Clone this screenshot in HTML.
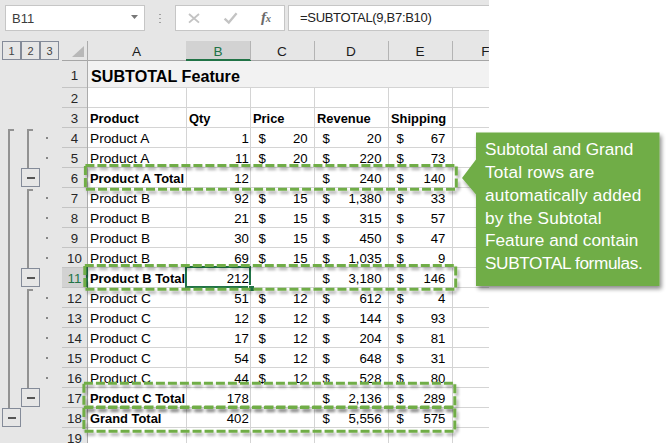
<!DOCTYPE html><html><head><meta charset="utf-8"><title>SUBTOTAL Feature</title><style>
html,body{margin:0;padding:0;background:#fff;}
body{width:672px;height:443px;overflow:hidden;position:relative;font-family:"Liberation Sans",sans-serif;}
#app{position:absolute;left:0;top:0;width:489px;height:443px;background:#e6e6e6;overflow:hidden;}
.abs{position:absolute;}
.box{position:absolute;background:#fff;border:1px solid #c6c6c6;box-sizing:border-box;}
#grid{position:absolute;left:88px;top:61px;width:401px;height:382px;background:#fff;}
.vl{position:absolute;width:1px;background:#d4d4d4;}
.hl{position:absolute;height:1px;background:#d4d4d4;}
.ch{position:absolute;top:41px;height:19px;line-height:21px;text-align:center;font-size:13.6px;color:#1c1c1c;}
.rh{position:absolute;left:62px;width:25px;height:20px;line-height:22px;text-align:center;font-size:13.3px;color:#262626;}
.c{position:absolute;height:20px;line-height:22px;font-size:13.7px;color:#000;white-space:nowrap;}
.n{font-size:13.2px;}
.b{font-weight:bold;font-size:12.9px;}
.r{text-align:right;}
.lvl{position:absolute;top:41px;width:19px;height:19px;box-sizing:border-box;border:1px solid #848b99;font-size:11px;line-height:18px;text-align:center;color:#444;}
.minus{position:absolute;width:19px;height:19px;box-sizing:border-box;border:1px solid #848b99;background:#e6e6e6;}
.minus i{position:absolute;left:5px;top:8px;width:8px;height:2px;background:#555;}
.dot{position:absolute;left:46px;width:2px;height:2px;background:#868686;}
#callout{position:absolute;left:485px;top:138.3px;width:172px;color:#fff;font-size:17.2px;line-height:22.75px;white-space:nowrap;}
</style></head><body>
<div id="app">
<div class="box" style="left:5px;top:5px;width:140px;height:26px;"></div>
<div class="abs" style="left:12px;top:10px;font-size:13px;line-height:18px;color:#3c3c3c;">B11</div>
<svg class="abs" style="left:130px;top:14px" width="10" height="6"><path d="M1 1h7l-3.5 4z" fill="#777"/></svg>
<div class="abs" style="left:159px;top:14px;width:2px;height:1px;background:#a0a0a0"></div>
<div class="abs" style="left:159px;top:18px;width:2px;height:1px;background:#a0a0a0"></div>
<div class="abs" style="left:159px;top:22px;width:2px;height:1px;background:#a0a0a0"></div>
<div class="box" style="left:175px;top:5px;width:110px;height:26px;"></div>
<svg class="abs" style="left:175px;top:5px" width="109" height="26"><path d="M14 9l10 8.6M24 9l-10 8.6" stroke="#c3c3c3" stroke-width="1.9" fill="none"/><path d="M49.6 13.6l4.2 4l7.8-9.4" stroke="#c3c3c3" stroke-width="2.3" fill="none"/></svg>
<div class="abs" style="left:261px;top:8px;font-family:'Liberation Serif',serif;font-style:italic;font-weight:bold;font-size:15.5px;line-height:18px;color:#6a6a6a;">f<span style="font-size:10.5px;margin-left:-0.5px">x</span></div>
<div class="box" style="left:288px;top:5px;width:210px;height:26px;"></div>
<div class="abs" style="left:300px;top:9px;font-size:13px;letter-spacing:-0.3px;line-height:18px;color:#222;">=SUBTOTAL(9,B7:B10)</div>
<div class="lvl" style="left:2px">1</div>
<div class="lvl" style="left:21px">2</div>
<div class="lvl" style="left:40px">3</div>
<svg class="abs" style="left:71px;top:45px" width="14" height="13"><path d="M13 1v11h-12z" fill="#b8b8b8"/></svg>
<div class="abs" style="left:62px;top:60px;width:427px;height:1px;background:#a6a6a6"></div>
<div class="ch" style="left:87px;width:99px;">A</div>
<div class="abs" style="left:186px;top:41px;width:1px;height:19px;background:#b4b4b4"></div>
<div class="abs" style="left:186px;top:41px;width:65px;height:19px;background:#d2d2d2"></div>
<div class="abs" style="left:186px;top:59px;width:65px;height:2px;background:#217346"></div>
<div class="ch" style="left:186px;width:64px;color:#217346;">B</div>
<div class="abs" style="left:250px;top:41px;width:1px;height:19px;background:#b4b4b4"></div>
<div class="ch" style="left:250px;width:64px;">C</div>
<div class="abs" style="left:314px;top:41px;width:1px;height:19px;background:#b4b4b4"></div>
<div class="ch" style="left:314px;width:74px;">D</div>
<div class="abs" style="left:388px;top:41px;width:1px;height:19px;background:#b4b4b4"></div>
<div class="ch" style="left:388px;width:64px;">E</div>
<div class="abs" style="left:452px;top:41px;width:1px;height:19px;background:#b4b4b4"></div>
<div class="ch" style="left:452px;width:67px;">F</div>
<div class="abs" style="left:87px;top:41px;width:1px;height:402px;background:#ababab"></div>
<div class="rh" style="top:61px;height:27px;line-height:29px;">1</div>
<div class="abs" style="left:62px;top:87px;width:25px;height:1px;background:#c4c4c4"></div>
<div class="rh" style="top:88px;height:20px;line-height:22px;">2</div>
<div class="abs" style="left:62px;top:107px;width:25px;height:1px;background:#c4c4c4"></div>
<div class="rh" style="top:108px;height:20px;line-height:22px;">3</div>
<div class="abs" style="left:62px;top:127px;width:25px;height:1px;background:#c4c4c4"></div>
<div class="rh" style="top:128px;height:20px;line-height:22px;">4</div>
<div class="abs" style="left:62px;top:147px;width:25px;height:1px;background:#c4c4c4"></div>
<div class="rh" style="top:148px;height:20px;line-height:22px;">5</div>
<div class="abs" style="left:62px;top:167px;width:25px;height:1px;background:#c4c4c4"></div>
<div class="rh" style="top:168px;height:20px;line-height:22px;">6</div>
<div class="abs" style="left:62px;top:187px;width:25px;height:1px;background:#c4c4c4"></div>
<div class="rh" style="top:188px;height:20px;line-height:22px;">7</div>
<div class="abs" style="left:62px;top:207px;width:25px;height:1px;background:#c4c4c4"></div>
<div class="rh" style="top:208px;height:20px;line-height:22px;">8</div>
<div class="abs" style="left:62px;top:227px;width:25px;height:1px;background:#c4c4c4"></div>
<div class="rh" style="top:228px;height:20px;line-height:22px;">9</div>
<div class="abs" style="left:62px;top:247px;width:25px;height:1px;background:#c4c4c4"></div>
<div class="rh" style="top:248px;height:20px;line-height:22px;">10</div>
<div class="abs" style="left:62px;top:267px;width:25px;height:1px;background:#c4c4c4"></div>
<div class="abs" style="left:62px;top:268px;width:25px;height:20px;background:#d2d2d2"></div>
<div class="abs" style="left:86px;top:267px;width:2px;height:21px;background:#217346"></div>
<div class="rh" style="top:268px;height:20px;line-height:22px;color:#217346;">11</div>
<div class="abs" style="left:62px;top:287px;width:25px;height:1px;background:#c4c4c4"></div>
<div class="rh" style="top:288px;height:20px;line-height:22px;">12</div>
<div class="abs" style="left:62px;top:307px;width:25px;height:1px;background:#c4c4c4"></div>
<div class="rh" style="top:308px;height:20px;line-height:22px;">13</div>
<div class="abs" style="left:62px;top:327px;width:25px;height:1px;background:#c4c4c4"></div>
<div class="rh" style="top:328px;height:20px;line-height:22px;">14</div>
<div class="abs" style="left:62px;top:347px;width:25px;height:1px;background:#c4c4c4"></div>
<div class="rh" style="top:348px;height:20px;line-height:22px;">15</div>
<div class="abs" style="left:62px;top:367px;width:25px;height:1px;background:#c4c4c4"></div>
<div class="rh" style="top:368px;height:20px;line-height:22px;">16</div>
<div class="abs" style="left:62px;top:387px;width:25px;height:1px;background:#c4c4c4"></div>
<div class="rh" style="top:388px;height:20px;line-height:22px;">17</div>
<div class="abs" style="left:62px;top:407px;width:25px;height:1px;background:#c4c4c4"></div>
<div class="rh" style="top:408px;height:20px;line-height:22px;">18</div>
<div class="abs" style="left:62px;top:427px;width:25px;height:1px;background:#c4c4c4"></div>
<div class="rh" style="top:428px;height:20px;line-height:22px;">19</div>
<div class="abs" style="left:62px;top:447px;width:25px;height:1px;background:#c4c4c4"></div>
<div class="abs" style="left:8px;top:129px;width:2px;height:279px;background:#929292"></div>
<div class="abs" style="left:8px;top:129px;width:6px;height:2px;background:#929292"></div>
<div class="abs" style="left:27px;top:129px;width:2px;height:39px;background:#929292"></div>
<div class="abs" style="left:27px;top:129px;width:6px;height:2px;background:#929292"></div>
<div class="abs" style="left:27px;top:189px;width:2px;height:79px;background:#929292"></div>
<div class="abs" style="left:27px;top:189px;width:6px;height:2px;background:#929292"></div>
<div class="abs" style="left:27px;top:289px;width:2px;height:99px;background:#929292"></div>
<div class="abs" style="left:27px;top:289px;width:6px;height:2px;background:#929292"></div>
<div class="minus" style="left:21px;top:168px"><i></i></div>
<div class="minus" style="left:21px;top:268px"><i></i></div>
<div class="minus" style="left:21px;top:388px"><i></i></div>
<div class="minus" style="left:2px;top:408px"><i></i></div>
<div class="dot" style="top:137px"></div>
<div class="dot" style="top:157px"></div>
<div class="dot" style="top:197px"></div>
<div class="dot" style="top:217px"></div>
<div class="dot" style="top:237px"></div>
<div class="dot" style="top:257px"></div>
<div class="dot" style="top:297px"></div>
<div class="dot" style="top:317px"></div>
<div class="dot" style="top:337px"></div>
<div class="dot" style="top:357px"></div>
<div class="dot" style="top:377px"></div>
<div id="grid">
<div class="abs" style="left:0;top:0;width:401px;height:26px;background:#f2f2f2"></div>
<div class="vl" style="left:98px;top:26px;height:356px"></div>
<div class="vl" style="left:162px;top:26px;height:356px"></div>
<div class="vl" style="left:226px;top:26px;height:356px"></div>
<div class="vl" style="left:300px;top:26px;height:356px"></div>
<div class="vl" style="left:364px;top:26px;height:356px"></div>
<div class="hl" style="left:0;top:26px;width:402px"></div>
<div class="hl" style="left:0;top:46px;width:402px"></div>
<div class="hl" style="left:0;top:66px;width:402px"></div>
<div class="hl" style="left:0;top:86px;width:402px"></div>
<div class="hl" style="left:0;top:106px;width:402px"></div>
<div class="hl" style="left:0;top:126px;width:402px"></div>
<div class="hl" style="left:0;top:146px;width:402px"></div>
<div class="hl" style="left:0;top:166px;width:402px"></div>
<div class="hl" style="left:0;top:186px;width:402px"></div>
<div class="hl" style="left:0;top:206px;width:402px"></div>
<div class="hl" style="left:0;top:226px;width:402px"></div>
<div class="hl" style="left:0;top:246px;width:402px"></div>
<div class="hl" style="left:0;top:266px;width:402px"></div>
<div class="hl" style="left:0;top:286px;width:402px"></div>
<div class="hl" style="left:0;top:306px;width:402px"></div>
<div class="hl" style="left:0;top:326px;width:402px"></div>
<div class="hl" style="left:0;top:346px;width:402px"></div>
<div class="hl" style="left:0;top:366px;width:402px"></div>
<div class="hl" style="left:0;top:386px;width:402px"></div>
</div>
<div class="abs b" style="left:91px;top:64px;font-size:16.15px;line-height:24px;color:#000;white-space:nowrap;">SUBTOTAL Feature</div>
<div class="c b" style="left:90px;top:108px;width:60px;">Product</div>
<div class="c b" style="left:189px;top:108px;width:60px;">Qty</div>
<div class="c b" style="left:253px;top:108px;width:60px;">Price</div>
<div class="c b" style="left:317px;top:108px;width:60px;">Revenue</div>
<div class="c b" style="left:391px;top:108px;width:60px;">Shipping</div>
<div class="c " style="left:90px;top:128px;width:96px;">Product A</div>
<div class="c r n" style="left:186px;top:128px;width:62.8px;">1</div>
<div class="c n" style="left:258.5px;top:128px;width:20px;">$</div>
<div class="c r n" style="left:250px;top:128px;width:57.6px;">20</div>
<div class="c n" style="left:322.5px;top:128px;width:20px;">$</div>
<div class="c r n" style="left:314px;top:128px;width:67.5px;">20</div>
<div class="c n" style="left:396.5px;top:128px;width:20px;">$</div>
<div class="c r n" style="left:388px;top:128px;width:57.4px;">67</div>
<div class="c " style="left:90px;top:148px;width:96px;">Product A</div>
<div class="c r n" style="left:186px;top:148px;width:62.8px;">11</div>
<div class="c n" style="left:258.5px;top:148px;width:20px;">$</div>
<div class="c r n" style="left:250px;top:148px;width:57.6px;">20</div>
<div class="c n" style="left:322.5px;top:148px;width:20px;">$</div>
<div class="c r n" style="left:314px;top:148px;width:67.5px;">220</div>
<div class="c n" style="left:396.5px;top:148px;width:20px;">$</div>
<div class="c r n" style="left:388px;top:148px;width:57.4px;">73</div>
<div class="c b" style="left:90px;top:168px;width:96px;">Product A Total</div>
<div class="c r n" style="left:186px;top:168px;width:62.8px;">12</div>
<div class="c n" style="left:322.5px;top:168px;width:20px;">$</div>
<div class="c r n" style="left:314px;top:168px;width:67.5px;">240</div>
<div class="c n" style="left:396.5px;top:168px;width:20px;">$</div>
<div class="c r n" style="left:388px;top:168px;width:57.4px;">140</div>
<div class="c " style="left:90px;top:188px;width:96px;">Product B</div>
<div class="c r n" style="left:186px;top:188px;width:62.8px;">92</div>
<div class="c n" style="left:258.5px;top:188px;width:20px;">$</div>
<div class="c r n" style="left:250px;top:188px;width:57.6px;">15</div>
<div class="c n" style="left:322.5px;top:188px;width:20px;">$</div>
<div class="c r n" style="left:314px;top:188px;width:67.5px;">1,380</div>
<div class="c n" style="left:396.5px;top:188px;width:20px;">$</div>
<div class="c r n" style="left:388px;top:188px;width:57.4px;">33</div>
<div class="c " style="left:90px;top:208px;width:96px;">Product B</div>
<div class="c r n" style="left:186px;top:208px;width:62.8px;">21</div>
<div class="c n" style="left:258.5px;top:208px;width:20px;">$</div>
<div class="c r n" style="left:250px;top:208px;width:57.6px;">15</div>
<div class="c n" style="left:322.5px;top:208px;width:20px;">$</div>
<div class="c r n" style="left:314px;top:208px;width:67.5px;">315</div>
<div class="c n" style="left:396.5px;top:208px;width:20px;">$</div>
<div class="c r n" style="left:388px;top:208px;width:57.4px;">57</div>
<div class="c " style="left:90px;top:228px;width:96px;">Product B</div>
<div class="c r n" style="left:186px;top:228px;width:62.8px;">30</div>
<div class="c n" style="left:258.5px;top:228px;width:20px;">$</div>
<div class="c r n" style="left:250px;top:228px;width:57.6px;">15</div>
<div class="c n" style="left:322.5px;top:228px;width:20px;">$</div>
<div class="c r n" style="left:314px;top:228px;width:67.5px;">450</div>
<div class="c n" style="left:396.5px;top:228px;width:20px;">$</div>
<div class="c r n" style="left:388px;top:228px;width:57.4px;">47</div>
<div class="c " style="left:90px;top:248px;width:96px;">Product B</div>
<div class="c r n" style="left:186px;top:248px;width:62.8px;">69</div>
<div class="c n" style="left:258.5px;top:248px;width:20px;">$</div>
<div class="c r n" style="left:250px;top:248px;width:57.6px;">15</div>
<div class="c n" style="left:322.5px;top:248px;width:20px;">$</div>
<div class="c r n" style="left:314px;top:248px;width:67.5px;">1,035</div>
<div class="c n" style="left:396.5px;top:248px;width:20px;">$</div>
<div class="c r n" style="left:388px;top:248px;width:57.4px;">9</div>
<div class="c b" style="left:90px;top:268px;width:96px;">Product B Total</div>
<div class="c r n" style="left:186px;top:268px;width:62.8px;">212</div>
<div class="c n" style="left:322.5px;top:268px;width:20px;">$</div>
<div class="c r n" style="left:314px;top:268px;width:67.5px;">3,180</div>
<div class="c n" style="left:396.5px;top:268px;width:20px;">$</div>
<div class="c r n" style="left:388px;top:268px;width:57.4px;">146</div>
<div class="c " style="left:90px;top:288px;width:96px;">Product C</div>
<div class="c r n" style="left:186px;top:288px;width:62.8px;">51</div>
<div class="c n" style="left:258.5px;top:288px;width:20px;">$</div>
<div class="c r n" style="left:250px;top:288px;width:57.6px;">12</div>
<div class="c n" style="left:322.5px;top:288px;width:20px;">$</div>
<div class="c r n" style="left:314px;top:288px;width:67.5px;">612</div>
<div class="c n" style="left:396.5px;top:288px;width:20px;">$</div>
<div class="c r n" style="left:388px;top:288px;width:57.4px;">4</div>
<div class="c " style="left:90px;top:308px;width:96px;">Product C</div>
<div class="c r n" style="left:186px;top:308px;width:62.8px;">12</div>
<div class="c n" style="left:258.5px;top:308px;width:20px;">$</div>
<div class="c r n" style="left:250px;top:308px;width:57.6px;">12</div>
<div class="c n" style="left:322.5px;top:308px;width:20px;">$</div>
<div class="c r n" style="left:314px;top:308px;width:67.5px;">144</div>
<div class="c n" style="left:396.5px;top:308px;width:20px;">$</div>
<div class="c r n" style="left:388px;top:308px;width:57.4px;">93</div>
<div class="c " style="left:90px;top:328px;width:96px;">Product C</div>
<div class="c r n" style="left:186px;top:328px;width:62.8px;">17</div>
<div class="c n" style="left:258.5px;top:328px;width:20px;">$</div>
<div class="c r n" style="left:250px;top:328px;width:57.6px;">12</div>
<div class="c n" style="left:322.5px;top:328px;width:20px;">$</div>
<div class="c r n" style="left:314px;top:328px;width:67.5px;">204</div>
<div class="c n" style="left:396.5px;top:328px;width:20px;">$</div>
<div class="c r n" style="left:388px;top:328px;width:57.4px;">81</div>
<div class="c " style="left:90px;top:348px;width:96px;">Product C</div>
<div class="c r n" style="left:186px;top:348px;width:62.8px;">54</div>
<div class="c n" style="left:258.5px;top:348px;width:20px;">$</div>
<div class="c r n" style="left:250px;top:348px;width:57.6px;">12</div>
<div class="c n" style="left:322.5px;top:348px;width:20px;">$</div>
<div class="c r n" style="left:314px;top:348px;width:67.5px;">648</div>
<div class="c n" style="left:396.5px;top:348px;width:20px;">$</div>
<div class="c r n" style="left:388px;top:348px;width:57.4px;">31</div>
<div class="c " style="left:90px;top:368px;width:96px;">Product C</div>
<div class="c r n" style="left:186px;top:368px;width:62.8px;">44</div>
<div class="c n" style="left:258.5px;top:368px;width:20px;">$</div>
<div class="c r n" style="left:250px;top:368px;width:57.6px;">12</div>
<div class="c n" style="left:322.5px;top:368px;width:20px;">$</div>
<div class="c r n" style="left:314px;top:368px;width:67.5px;">528</div>
<div class="c n" style="left:396.5px;top:368px;width:20px;">$</div>
<div class="c r n" style="left:388px;top:368px;width:57.4px;">80</div>
<div class="c b" style="left:90px;top:388px;width:96px;">Product C Total</div>
<div class="c r n" style="left:186px;top:388px;width:62.8px;">178</div>
<div class="c n" style="left:322.5px;top:388px;width:20px;">$</div>
<div class="c r n" style="left:314px;top:388px;width:67.5px;">2,136</div>
<div class="c n" style="left:396.5px;top:388px;width:20px;">$</div>
<div class="c r n" style="left:388px;top:388px;width:57.4px;">289</div>
<div class="c b" style="left:90px;top:408px;width:96px;">Grand Total</div>
<div class="c r n" style="left:186px;top:408px;width:62.8px;">402</div>
<div class="c n" style="left:322.5px;top:408px;width:20px;">$</div>
<div class="c r n" style="left:314px;top:408px;width:67.5px;">5,556</div>
<div class="c n" style="left:396.5px;top:408px;width:20px;">$</div>
<div class="c r n" style="left:388px;top:408px;width:57.4px;">575</div>
<div class="abs" style="left:185px;top:266px;width:66px;height:22px;box-sizing:border-box;border:2px solid #217346"></div>
<div class="abs" style="left:248px;top:285px;width:5px;height:5px;background:#217346;border:1px solid #fff;border-right:0;border-bottom:0;box-sizing:content-box"></div>
</div>
<svg class="abs" style="left:0;top:0" width="672" height="443"><defs><filter id="sh" x="-10%" y="-30%" width="120%" height="160%"><feGaussianBlur in="SourceAlpha" stdDeviation="1.5"/><feOffset dx="2" dy="3"/><feComponentTransfer><feFuncA type="linear" slope="0.32"/></feComponentTransfer><feMerge><feMergeNode/><feMergeNode in="SourceGraphic"/></feMerge></filter><filter id="sh2" x="-10%" y="-10%" width="125%" height="125%"><feGaussianBlur in="SourceAlpha" stdDeviation="2"/><feOffset dx="2" dy="2.5"/><feComponentTransfer><feFuncA type="linear" slope="0.45"/></feComponentTransfer><feMerge><feMergeNode/><feMergeNode in="SourceGraphic"/></feMerge></filter></defs>
<rect filter="url(#sh)" x="85.4" y="165.5" width="370.9" height="23.85" fill="none" stroke="#70ad47" stroke-width="3" stroke-dasharray="9 3"/>
<rect filter="url(#sh)" x="84.8" y="265.5" width="370.9" height="23.85" fill="none" stroke="#70ad47" stroke-width="3" stroke-dasharray="9 3"/>
<rect filter="url(#sh)" x="83.9" y="383.2" width="370.9" height="23.85" fill="none" stroke="#70ad47" stroke-width="3" stroke-dasharray="9 3"/>
<rect filter="url(#sh)" x="83.9" y="407.4" width="370.9" height="23.85" fill="none" stroke="#70ad47" stroke-width="3" stroke-dasharray="9 3"/>
<path filter="url(#sh2)" d="M476 132.5H659.5V286H476V194.5L462 178L476 159.5Z" fill="#70ad47"/>
</svg>
<div id="callout"><div style="letter-spacing:-0.05px">Subtotal and Grand</div><div style="letter-spacing:0.18px">Total rows are</div><div style="letter-spacing:0.185px">automatically added</div><div style="letter-spacing:0.14px">by the Subtotal</div><div style="letter-spacing:0.03px">Feature and contain</div><div style="letter-spacing:-0.365px">SUBTOTAL formulas.</div></div>
</body></html>
